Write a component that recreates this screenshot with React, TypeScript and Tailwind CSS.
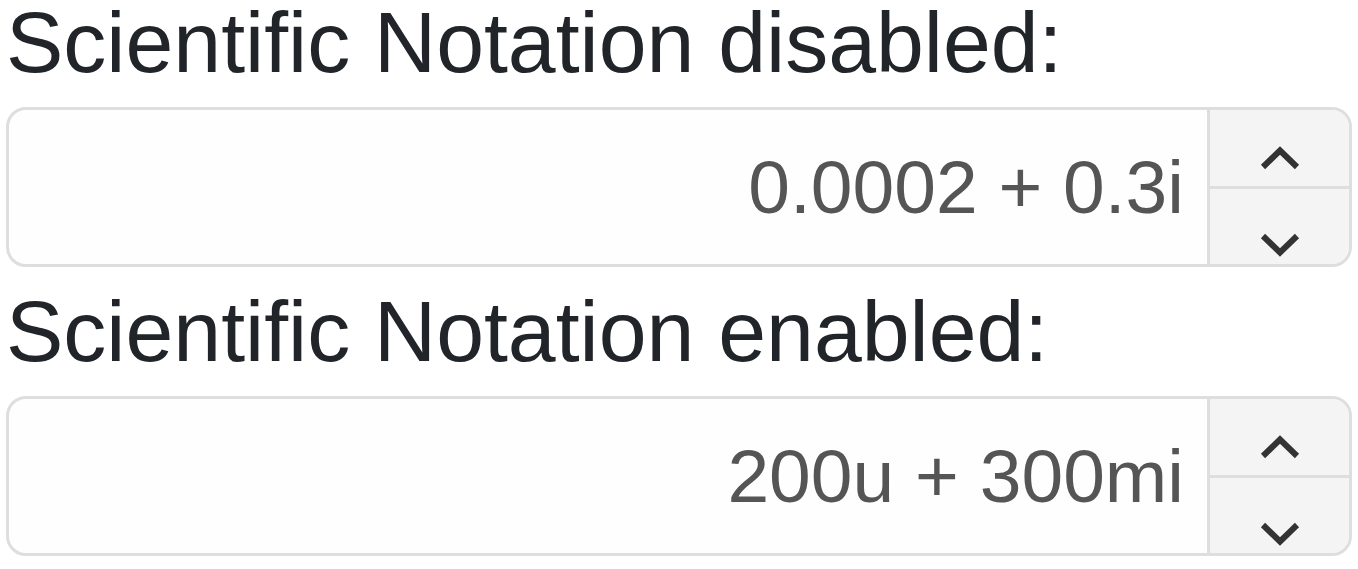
import { useState } from 'react';

type Field = {
  label: string;
  value: string;
};

const fields: Field[] = [
  { label: 'Scientific Notation disabled:', value: '0.0002 + 0.3i' },
  { label: 'Scientific Notation enabled:', value: '200u + 300mi' },
];

function Chevron({ up }: { up: boolean }) {
  return (
    <svg width="40" height="24" viewBox="0 0 40 24" fill="none">
      <polyline
        points={up ? '3,21 20,4.5 37,21' : '3,3 20,19.5 37,3'}
        stroke="#333"
        strokeWidth="6"
        strokeLinejoin="miter"
      />
    </svg>
  );
}

function ComplexInput({ label, value }: Field) {
  const [text] = useState(value);

  return (
    <div>
      <label className="block text-[86px] leading-[84px] text-[#212529]">{label}</label>
      <div className="mt-[23px] mb-[22px] flex h-[160px] rounded-[20px] border-[3px] border-[#dedede] bg-[#fefefe] overflow-hidden">
        <div className="flex-1 flex items-center justify-end pr-[23px] text-[75px] text-[#555]">{text}</div>
        <div className="w-[142px] flex flex-col border-l-[3px] border-[#dedede] bg-[#f4f4f4]">
          <button className="h-[79px] shrink-0 flex items-end justify-center pb-[16px] border-b-[3px] border-[#dedede]">
            <Chevron up />
          </button>
          <button className="flex-1 flex items-end justify-center pb-[7px]">
            <Chevron up={false} />
          </button>
        </div>
      </div>
    </div>
  );
}

export default function App() {
  return (
    <div className="px-[6px] bg-white font-['Liberation_Sans',Arial,sans-serif]">
      {fields.map((f, i) => (
        <ComplexInput key={i} label={f.label} value={f.value} />
      ))}
    </div>
  );
}
